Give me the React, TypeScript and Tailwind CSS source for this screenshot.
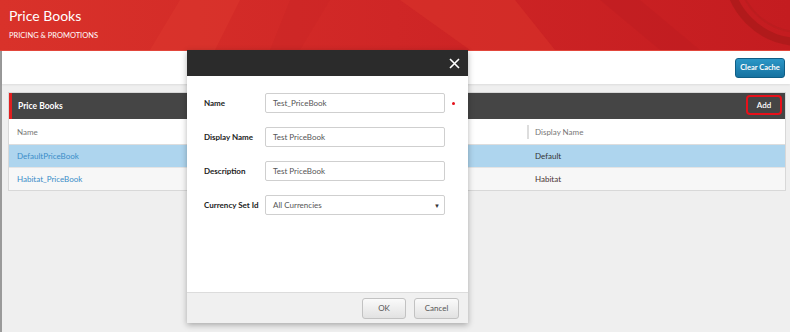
import React from "react";

const font = { fontFamily: 'Lato, "Open Sans", "Liberation Sans", sans-serif' };

function HeaderArt() {
  return (
    <svg className="absolute inset-0 h-full w-full" viewBox="0 0 790 50" preserveAspectRatio="none">
      <defs>
        <linearGradient id="hdr" x1="0" y1="0" x2="1" y2="0">
          <stop offset="0" stopColor="#d9322a" />
          <stop offset="0.5" stopColor="#cf2626" />
          <stop offset="1" stopColor="#c41c20" />
        </linearGradient>
      </defs>
      <rect width="790" height="50" fill="url(#hdr)" />
      <polygon points="150,50 180,0 240,0 215,50" fill="#dd3a2e" opacity="0.45" />
      <polygon points="400,0 515,0 555,50 470,50" fill="#de3a2d" opacity="0.4" />
      <polygon points="290,0 330,0 300,50 270,50" fill="#c72426" opacity="0.3" />
      <polygon points="600,0 640,0 700,50 660,50" fill="#bb1c20" opacity="0.4" />
      <circle cx="800" cy="-30" r="72" fill="none" stroke="#a81a1a" strokeWidth="8" opacity="0.7" />
      <circle cx="800" cy="-30" r="62" fill="none" stroke="#b31d1d" strokeWidth="2" opacity="0.5" />
    </svg>
  );
}

function Field({ label, value, select, required }: { label: string; value: string; select?: boolean; required?: boolean }) {
  return (
    <div className="flex items-center h-5">
      <div className="w-[61px] text-[8px] font-bold text-[#222] whitespace-nowrap">{label}</div>
      <div className="relative w-[180px] h-5 border border-[#cfcfcf] rounded-[2px] bg-white flex items-center pl-[7px] text-[8px] text-[#555]">
        {value}
        {select && <span className="absolute right-[4px] top-[5px] text-[6px] text-[#333]">▼</span>}
      </div>
      {required && <div className="ml-[7px] w-[3px] h-[3px] rounded-full bg-[#e4101a]" />}
    </div>
  );
}

export default function App() {
  return (
    <div className="relative w-[790px] h-[332px] overflow-hidden bg-[#efefef]" style={font}>
      <header className="relative h-[51px] border-b border-[#e2463b] overflow-hidden">
        <HeaderArt />
        <div className="relative pl-[9px] pt-[6px]">
          <div className="text-[14px] leading-[19px] text-white">Price Books</div>
          <div className="mt-[6px] text-[7.5px] leading-[10px] text-white uppercase">Pricing &amp; Promotions</div>
        </div>
      </header>

      <div className="border-l-2 border-[#9a9a9a] h-[281px]">
        <div className="h-[33px] bg-white shadow-[0_1px_2px_rgba(0,0,0,0.08)] flex items-center justify-end pr-[5px]">
          <button className="h-[20px] w-[50px] rounded-[3px] border border-[#0f5e86] bg-gradient-to-b from-[#2c97c7] to-[#1672a0] text-white text-[7.5px] font-bold">
            Clear Cache
          </button>
        </div>

        <div className="pt-[8px] pl-[6px] pr-[4px]">
          <div className="border border-[#d8d8d8] bg-white">
            <div className="h-[26px] bg-[#454545] border-l-[3px] border-[#e21f1f] flex items-center justify-between pl-[6px] pr-[3px]">
              <div className="text-[8.5px] font-bold text-white">Price Books</div>
              <div className="-mt-[2px] h-[20px] w-[36px] rounded-[4px] border-2 border-[#e8101a] flex items-center justify-center text-[8px] font-semibold text-white">
                Add
              </div>
            </div>
            <div className="h-[26px] flex items-center border-b border-[#dddddd] text-[8px] text-[#777]">
              <div className="w-[518px] pl-[8px]">Name</div>
              <div className="w-[2px] h-[14px] bg-[#dddddd]" />
              <div className="pl-[6px]">Display Name</div>
            </div>
            <div className="h-[23px] flex items-center bg-[#aed5ee] border-b border-[#e4e4e4] text-[8px]">
              <div className="w-[520px] pl-[8px] text-[#3a8dc8]">DefaultPriceBook</div>
              <div className="pl-[6px] text-[#333]">Default</div>
            </div>
            <div className="h-[22px] flex items-center bg-[#f7f7f7] text-[8px]">
              <div className="w-[520px] pl-[8px] text-[#3a8dc8]">Habitat_PriceBook</div>
              <div className="pl-[6px] text-[#4a3333]">Habitat</div>
            </div>
          </div>
        </div>
      </div>

      <div className="absolute left-[187px] top-[50px] w-[281px] shadow-[0_2px_6px_rgba(0,0,0,0.3)]">
        <div className="h-[26px] bg-[#2b2b2b] flex items-center justify-end pr-[8px]">
          <svg width="11" height="11" viewBox="0 0 11 11">
            <path d="M1 1L10 10M10 1L1 10" stroke="#fff" strokeWidth="1.6" />
          </svg>
        </div>
        <div className="h-[216px] bg-white pt-[17px] pl-[17px] flex flex-col gap-[14px]">
          <Field label="Name" value="Test_PriceBook" required />
          <Field label="Display Name" value="Test PriceBook" />
          <Field label="Description" value="Test PriceBook" />
          <Field label="Currency Set Id" value="All Currencies" select />
        </div>
        <div className="h-[31px] bg-[#f0f0f0] border-t border-[#dcdcdc] flex items-center justify-end gap-[8px] pr-[9px]">
          <button className="w-[44px] h-[21px] rounded-[3px] border border-[#c2c2c2] bg-gradient-to-b from-[#fafafa] to-[#e2e2e2] text-[8px] text-[#555]">
            OK
          </button>
          <button className="w-[45px] h-[21px] rounded-[3px] border border-[#c2c2c2] bg-gradient-to-b from-[#fafafa] to-[#e2e2e2] text-[8px] text-[#555]">
            Cancel
          </button>
        </div>
      </div>
    </div>
  );
}
